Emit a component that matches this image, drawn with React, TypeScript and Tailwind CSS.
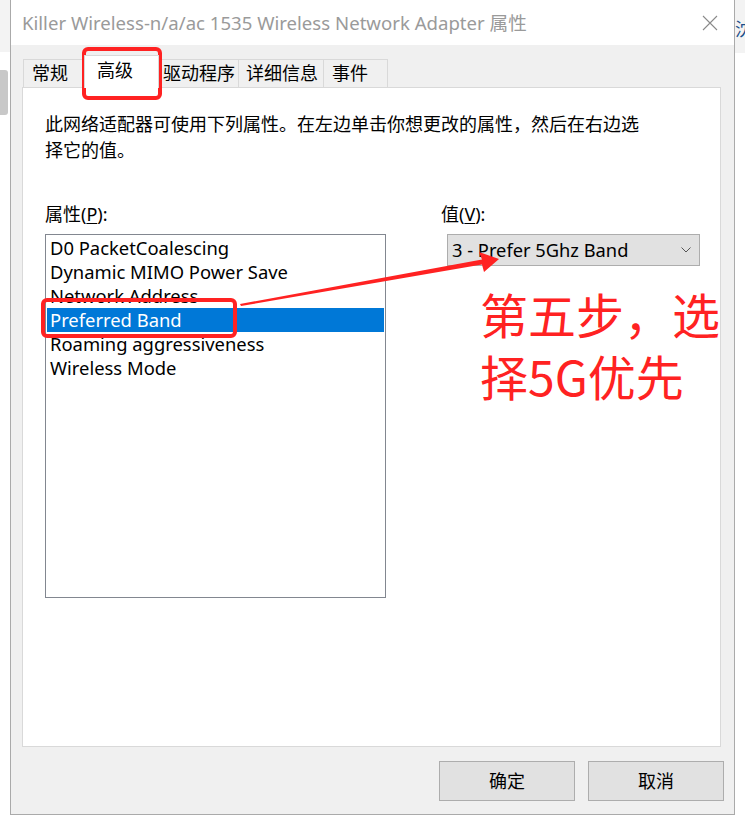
const ui = '"Noto Sans", "Noto Sans CJK SC", sans-serif';

const tabs = [
  { label: "常规", w: "w-[61px]", pl: "pl-[8px]" },
  { label: "高级", w: "w-[75px]", pl: "pl-[12px]", active: true },
  { label: "驱动程序", w: "w-[80px]", pl: "pl-[4px]" },
  { label: "详细信息", w: "w-[85px]", pl: "pl-[7px]" },
  { label: "事件", w: "w-[64px]", pl: "pl-[8px]" },
];

const props = [
  "D0 PacketCoalescing",
  "Dynamic MIMO Power Save",
  "Network Address",
  "Preferred Band",
  "Roaming aggressiveness",
  "Wireless Mode",
];

function Tab({ label, w, pl, active }: { label: string; w: string; pl: string; active?: boolean }) {
  if (active) {
    return (
      <div
        className={`${w} ${pl} h-[33px] -mb-px bg-white border border-b-0 border-[#d9d9d9] flex items-center pb-[3px] text-[18px] relative z-10`}
      >
        {label}
      </div>
    );
  }
  return (
    <div
      className={`${w} ${pl} h-[28px] border border-b-0 border-l-0 first:border-l border-[#d9d9d9] flex items-center text-[18px]`}
    >
      {label}
    </div>
  );
}

function Annotations() {
  return (
    <>
      <svg className="absolute inset-0 pointer-events-none" width={745} height={825}>
        <rect x={84} y={49} width={76} height={49} rx={4} fill="none" stroke="#ff2222" strokeWidth={4} />
        <rect x={43} y={300} width={192} height={36} rx={4} fill="none" stroke="#ff2222" strokeWidth={4} />
        <polygon
          points="240,304 482,259.5 479,252 499,259 484,272 482,264.5 241,306"
          fill="#ff2222"
        />
      </svg>
      <div
        className="absolute left-[480px] top-[282px] text-[48px] leading-[62px] text-[#ff2222]"
        style={{ fontFamily: '"Noto Sans CJK SC", sans-serif' }}
      >
        第五步，选
        <br />
        择5G优先
      </div>
    </>
  );
}

export default function App() {
  return (
    <div className="relative w-[745px] h-[825px] bg-white flex text-black" style={{ fontFamily: ui }}>
      {/* desktop strip, left */}
      <div className="w-[10px] shrink-0 flex flex-col">
        <div className="h-[52px] bg-[#f3f3f3]" />
        <div className="mt-[18px] h-[45px] w-[8px] bg-[#c8c8c8] rounded-r-[3px]" />
      </div>

      {/* dialog window */}
      <div className="w-[725px] shrink-0 h-[815px] border-x border-b border-[#aaaaaa] flex flex-col">
        <div className="h-[45px] bg-white flex items-center justify-between pl-[11px] pr-[16px]">
          <span className="text-[18.6px] text-[#9a9a9a]">
            Killer Wireless-n/a/ac 1535 Wireless Network Adapter 属性
          </span>
          <svg width="16" height="16" viewBox="0 0 16 16">
            <path d="M1 1L15 15M15 1L1 15" stroke="#8a8a8a" strokeWidth="1.1" />
          </svg>
        </div>

        <div className="flex-1 bg-[#f0f0f0] flex flex-col">
          <div className="flex items-end h-[42px] pl-[12px]">
            {tabs.map((t) => (
              <Tab key={t.label} {...t} />
            ))}
          </div>

          <div className="ml-[11px] mr-[13px] h-[660px] bg-white border border-[#d9d9d9] pt-[23px] pl-[22px]">
            <p className="text-[18px] leading-[26px]">
              此网络适配器可使用下列属性。在左边单击你想更改的属性，然后在右边选
              <br />
              择它的值。
            </p>

            <div className="flex mt-[38px]">
              <div className="w-[341px] flex flex-col">
                <div className="text-[18px] leading-[26px]">
                  属性(<span className="underline underline-offset-2">P</span>):
                </div>
                <div className="mt-[7px] h-[364px] border border-[#828790] p-px">
                  {props.map((p) => (
                    <div
                      key={p}
                      className={`h-[24px] flex items-center pl-[3px] text-[18.4px] whitespace-nowrap ${
                        p === "Preferred Band" ? "bg-[#0078d7] text-white" : ""
                      }`}
                    >
                      {p}
                    </div>
                  ))}
                </div>
              </div>

              <div className="ml-[55px] flex flex-col">
                <div className="text-[18px] leading-[26px]">
                  值(<span className="underline underline-offset-2">V</span>):
                </div>
                <div className="mt-[7px] ml-[6px] w-[253px] h-[32px] bg-[#e1e1e1] border border-[#adadad] flex items-center justify-between pl-[4px] pr-[8px] text-[18.3px]">
                  <span>3 - Prefer 5Ghz Band</span>
                  <svg width="10" height="6" viewBox="0 0 10 6">
                    <path d="M0.5 0.5L5 5L9.5 0.5" fill="none" stroke="#555" strokeWidth="1" />
                  </svg>
                </div>
              </div>
            </div>
          </div>

          <div className="flex justify-end gap-[13px] pr-[10px] mt-[14px]">
            <button className="w-[136px] h-[40px] bg-[#e1e1e1] border border-[#adadad] text-[18px]">
              确定
            </button>
            <button className="w-[136px] h-[40px] bg-[#e1e1e1] border border-[#adadad] text-[18px]">
              取消
            </button>
          </div>
        </div>
      </div>

      {/* desktop strip, right */}
      <div className="w-[10px] shrink-0 overflow-hidden flex flex-col">
        <div className="h-[53px] bg-[#f3f3f3] overflow-hidden">
          <span className="block mt-[20px] text-[18px] text-[#1b4f8a] leading-none">沈</span>
        </div>
      </div>

      <Annotations />
    </div>
  );
}
